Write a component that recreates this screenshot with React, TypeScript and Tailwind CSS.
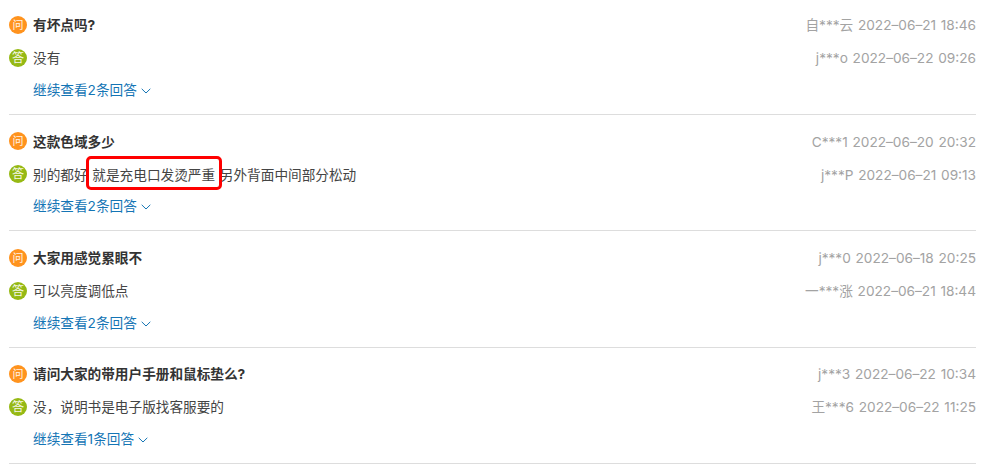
import React from "react";

type Item = {
  question: string;
  asker: string;
  answer: React.ReactNode;
  answerer: string;
  more: number;
};

export default function App() {
  const items: Item[] = [
    { question: "有坏点吗?", asker: "自***云 2022–06–21 18:46", answer: "没有", answerer: "j***o 2022–06–22 09:26", more: 2 },
    {
      question: "这款色域多少",
      asker: "C***1 2022–06–20 20:32",
      answer: (
        <>
          别的都好 <Marked>就是充电口发烫严重</Marked> 另外背面中间部分松动
        </>
      ),
      answerer: "j***P 2022–06–21 09:13",
      more: 2,
    },
    { question: "大家用感觉累眼不", asker: "j***0 2022–06–18 20:25", answer: "可以亮度调低点", answerer: "一***涨 2022–06–21 18:44", more: 2 },
    { question: "请问大家的带用户手册和鼠标垫么?", asker: "j***3 2022–06–22 10:34", answer: "没，说明书是电子版找客服要的", answerer: "王***6 2022–06–22 11:25", more: 1 },
  ];

  return (
    <div className="h-[470px] w-[1000px] overflow-hidden bg-white pl-[9px] pr-6 font-[Inter,'Noto_Sans_CJK_SC',sans-serif] text-[13.65px] text-[#333]">
      {items.map((item) => (
        <QuestionItem key={item.question} item={item} />
      ))}
    </div>
  );
}

function QuestionItem({ item }: { item: Item }) {
  return (
    <section className="h-[116.4px] pt-[9px]">
      <div className="h-[106px] border-b border-[#ddd]">
        <div className="flex h-[33px] items-center">
          <Badge label="问" className="bg-[#ff931e] text-[11px]" />
          <p className="font-bold">{item.question}</p>
          <p className="ml-auto text-[#a3a3a3] [word-spacing:0.9px]">{item.asker}</p>
        </div>
        <div className="flex h-[33px] items-center">
          <Badge label="答" className="bg-[#96b914] text-xs" />
          <p className="text-[#444] [word-spacing:0.9px]">{item.answer}</p>
          <p className="ml-auto text-[#a3a3a3] [word-spacing:0.9px]">{item.answerer}</p>
        </div>
        <a href="#" className="ml-6 flex h-[30px] w-fit items-center text-[#1475b5]">
          继续查看{item.more}条回答
          <svg className="ml-1 mt-0.5 h-[6px] w-[10px]" viewBox="0 0 10 6" fill="none" stroke="currentColor">
            <path d="M0.7 0.8 L5 5 L9.3 0.8" />
          </svg>
        </a>
      </div>
    </section>
  );
}

function Badge({ label, className }: { label: string; className: string }) {
  return (
    <span className={`mb-px mr-1.5 flex h-[18px] w-[18px] items-center justify-center rounded-full text-white/90 ${className}`}>
      {label}
    </span>
  );
}

// Red frame drawn around the highlighted part of an answer
function Marked({ children }: { children: React.ReactNode }) {
  return (
    <span className="relative">
      {children}
      <span className="absolute -left-[6px] -right-[7px] -top-[11px] -bottom-[7px] rounded-[5px] border-3 border-[#f00]" />
    </span>
  );
}
